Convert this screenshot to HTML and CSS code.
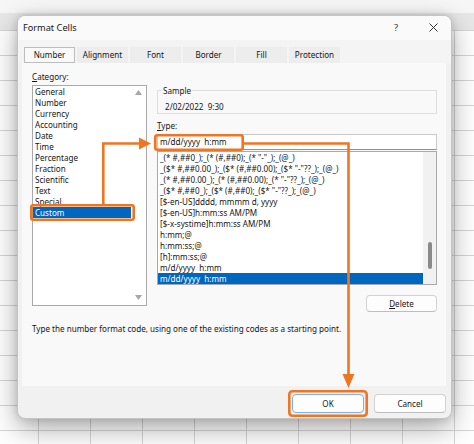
FILE: index.html
```html
<!DOCTYPE html>
<html>
<head>
<meta charset="utf-8">
<link rel="stylesheet" href="styles.css">
</head>
<body>
<div class="sheet">
  <div class="dialog">
    <div class="titlebar">
      <span class="title">Format Cells</span>
      <span class="tb-help">?</span>
      <svg class="tb-close" width="9" height="9" viewBox="0 0 9 9"><path d="M0.5 0.5 L8.5 8.5 M8.5 0.5 L0.5 8.5" stroke="#333" stroke-width="1" fill="none"/></svg>
    </div>
    <div class="tabs">
      <div class="tab active">Number</div>
      <div class="tab">Alignment</div>
      <div class="tab">Font</div>
      <div class="tab">Border</div>
      <div class="tab">Fill</div>
      <div class="tab">Protection</div>
    </div>
    <div class="panel">
      <div class="cols">
        <div class="leftcol">
          <div class="label cat-label"><u>C</u>ategory:</div>
          <div class="catlist">
            <div class="items">
              <div class="item">General</div>
              <div class="item">Number</div>
              <div class="item">Currency</div>
              <div class="item">Accounting</div>
              <div class="item">Date</div>
              <div class="item">Time</div>
              <div class="item">Percentage</div>
              <div class="item">Fraction</div>
              <div class="item">Scientific</div>
              <div class="item">Text</div>
              <div class="item">Special</div>
              <div class="item sel">Custom</div>
            </div>
            <div class="arrows">
              <svg width="7" height="5" viewBox="0 0 7 5"><path d="M0 5 L3.5 0 L7 5 Z" fill="#a8a8a8"/></svg>
              <svg width="7" height="5" viewBox="0 0 7 5"><path d="M0 0 L3.5 5 L7 0 Z" fill="#a8a8a8"/></svg>
            </div>
          </div>
        </div>
        <div class="rightcol">
          <fieldset class="sample">
            <legend>Sample</legend>
            <div class="sample-val">2/02/2022&nbsp;&nbsp;9:30</div>
          </fieldset>
          <div class="label type-label"><u>T</u>ype:</div>
          <div class="type-input">m/dd/yyyy&nbsp;&nbsp;h:mm</div>
          <div class="typelist">
            <div class="items">
              <div class="item">_(* #,##0_);_(* (#,##0);_(* "-"_);_(@_)</div>
              <div class="item">_($* #,##0.00_);_($* (#,##0.00);_($* "-"??_);_(@_)</div>
              <div class="item">_(* #,##0.00_);_(* (#,##0.00);_(* "-"??_);_(@_)</div>
              <div class="item">_($* #,##0_);_($* (#,##0);_($* "-"??_);_(@_)</div>
              <div class="item">[$-en-US]dddd, mmmm d, yyyy</div>
              <div class="item">[$-en-US]h:mm:ss AM/PM</div>
              <div class="item">[$-x-systime]h:mm:ss AM/PM</div>
              <div class="item">h:mm;@</div>
              <div class="item">h:mm:ss;@</div>
              <div class="item">[h]:mm:ss;@</div>
              <div class="item">m/d/yyyy&nbsp;&nbsp;h:mm</div>
              <div class="item sel">m/dd/yyyy&nbsp;&nbsp;h:mm</div>
            </div>
            <div class="track"><div class="thumb"></div></div>
          </div>
          <div class="btnrow"><div class="btn delete"><u>D</u>elete</div></div>
        </div>
      </div>
      <p class="desc">Type the number format code, using one of the existing codes as a starting point.</p>
    </div>
    <div class="footer">
      <div class="btn ok">OK</div>
      <div class="btn cancel">Cancel</div>
    </div>
  </div>
  <svg class="annot" width="474" height="444" viewBox="0 0 474 444">
    <g fill="none" stroke="#ee7623" stroke-width="2.6">
      <rect x="31.3" y="205.3" width="102.4" height="14.4" rx="2"/>
      <rect x="155.3" y="135.3" width="87.4" height="14.4" rx="2"/>
      <rect x="289.3" y="391.3" width="77.4" height="24.4" rx="3"/>
      <path d="M103.3 205.3 V143.5 H141"/>
      <path d="M242.7 143.5 H348.5 V376"/>
    </g>
    <g fill="#ee7623">
      <path d="M139 137.5 L151 143.5 L139 149.5 Z"/>
      <path d="M342.5 374 L354.5 374 L348.5 388 Z"/>
    </g>
  </svg>
</div>
</body>
</html>
```

FILE: styles.css
```css
html, body {
  margin: 0;
  padding: 0;
}

body {
  font-family: "Noto Sans", "DejaVu Sans", sans-serif;
  color: #161616;
}

.sheet {
  position: relative;
  width: 474px;
  height: 444px;
  overflow: hidden;
  box-sizing: border-box;
  padding: 15px 0 0 17px;
  background-color: #ffffff;
  background-image:
    linear-gradient(to bottom, #f6f6f6 0, #f6f6f6 13px, #e7e7e7 13px, #e7e7e7 30px, transparent 30px),
    linear-gradient(to right, #d5d5d5 1px, transparent 1px),
    linear-gradient(to bottom, #d5d5d5 1px, transparent 1px);
  background-size: 100% 100%, 52px 100%, 100% 25px;
  background-position: 0 0, 38px 0, 0 5px;
}

.dialog {
  width: 435px;
  height: 404px;
  box-sizing: border-box;
  border: 1px solid #c4c4c4;
  border-radius: 8px;
  background: #f1f1f1;
  box-shadow: 0 10px 28px rgba(0, 0, 0, 0.33), 0 0 8px rgba(0, 0, 0, 0.14);
  display: flex;
  flex-direction: column;
  overflow: hidden;
}

/* title bar */
.titlebar {
  height: 24px;
  flex: none;
  display: flex;
  align-items: center;
  padding: 0 0 2px 5px;
  box-sizing: border-box;
  background: #fafafa;
}

.title {
  font-size: 9.2px;
  flex: 1;
}

.tb-help {
  font-size: 9.5px;
  color: #333;
  margin-right: 31px;
}

.tb-close {
  margin-right: 13px;
}

/* tabs */
.tabs {
  height: 23px;
  flex: none;
  display: flex;
  gap: 2px;
  padding: 7px 0 0 6px;
  box-sizing: border-box;
  background: #f4f4f4;
}

.tab {
  width: 51px;
  height: 16px;
  box-sizing: border-box;
  font-size: 8.1px;
  line-height: 16px;
  text-align: center;
  background: #ededed;
}

.tab.active {
  border: 1px solid #bdbdbd;
  background: #f9f9f9;
  line-height: 14px;
}

/* panel */
.panel {
  height: 323px;
  flex: none;
  margin: 0 5px 0 4px;
  padding: 0 9px 0 10px;
  box-sizing: border-box;
  background: #f9f9f9;
}

.cols {
  display: grid;
  grid-template-columns: 115px 1fr;
  column-gap: 10px;
  align-items: start;
}

.label {
  font-size: 8.1px;
  line-height: 12px;
}

.cat-label {
  padding-top: 8px;
  margin-bottom: 2px;
}

.catlist {
  height: 221px;
  box-sizing: border-box;
  border: 1px solid #a9a9a9;
  background: #ffffff;
  display: flex;
}

.items {
  flex: 1;
  display: flex;
  flex-direction: column;
}

.item {
  height: 11px;
  font-size: 8.1px;
  line-height: 11px;
  padding-left: 2px;
  white-space: nowrap;
  overflow: hidden;
}

.catlist .items {
  width: 98px;
  flex: none;
}

.item.sel {
  background: #0067c0;
  color: #ffffff;
}

.arrows {
  flex: 1;
  display: flex;
  flex-direction: column;
  justify-content: space-between;
  align-items: center;
  padding: 4px 0 5px;
}

.arrows svg {
  display: block;
}

/* right column */
.sample {
  margin: 22px 0 0;
  padding: 5px 4px 1px;
  border: 1px solid #dedede;
  min-width: 0;
}

.sample legend {
  font-size: 8.1px;
  line-height: 11px;
  padding: 0 1px;
}

.sample-val {
  font-size: 8.1px;
  line-height: 11px;
  padding-left: 3px;
}

.type-label {
  margin-top: 6px;
}

.type-input {
  margin-top: 2px;
  height: 16px;
  box-sizing: border-box;
  border: 1px solid #c9c9c9;
  border-bottom-color: #8f8f8f;
  background: #ffffff;
  font-size: 8.1px;
  line-height: 14px;
  padding-left: 2px;
}

.typelist {
  margin-top: 1px;
  height: 134px;
  box-sizing: border-box;
  border: 1px solid #a9a9a9;
  background: #ffffff;
  display: flex;
}

.track {
  width: 13px;
  flex: none;
  background: #f1f1f1;
  display: flex;
  justify-content: center;
}

.thumb {
  width: 4px;
  height: 27px;
  margin-top: 90px;
  border-radius: 2px;
  background: #8a8a8a;
}

.btnrow {
  display: flex;
  justify-content: flex-end;
  margin-top: 10px;
}

.btn {
  box-sizing: border-box;
  width: 72px;
  height: 19px;
  border: 1px solid #d2d2d2;
  border-bottom-color: #bdbdbd;
  border-radius: 4px;
  background: #fdfdfd;
  font-size: 8.1px;
  line-height: 17px;
  text-align: center;
}

.delete {
  width: 71px;
  height: 17px;
  line-height: 15px;
}

.desc {
  margin: 11px 0 0;
  font-size: 8.1px;
  line-height: 11px;
}

/* footer */
.footer {
  flex: 1;
  display: flex;
  justify-content: flex-end;
  gap: 10px;
  padding: 8px 5px 0 0;
  box-sizing: border-box;
}

.ok {
  border-color: #7fb0e0;
}

/* annotation overlay */
.annot {
  position: absolute;
  left: 0;
  top: 0;
  pointer-events: none;
}
```
